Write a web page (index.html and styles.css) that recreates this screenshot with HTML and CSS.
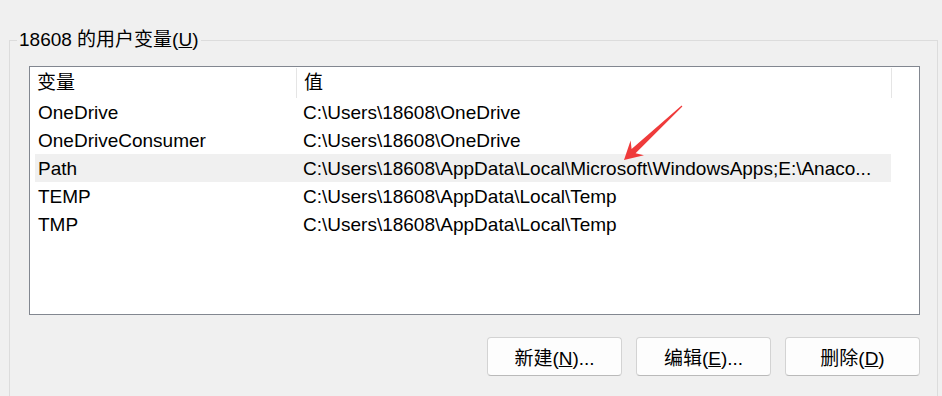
FILE: index.html
```html
<!DOCTYPE html>
<html lang="zh-CN">
<head>
    <meta charset="UTF-8">
    <meta name="viewport" content="width=device-width, initial-scale=1.0">
    <title>环境变量</title>
    <link rel="stylesheet" href="styles.css">
</head>
<body>
    <fieldset class="group">
        <legend>18608 的用户变量(<u>U</u>)</legend>
        <div class="list">
            <div class="list-head">
                <div class="head-cell head-name">变量</div>
                <div class="head-cell head-value">值</div>
            </div>
            <div class="row">
                <span class="name">OneDrive</span>
                <span class="value">C:\Users\18608\OneDrive</span>
            </div>
            <div class="row">
                <span class="name">OneDriveConsumer</span>
                <span class="value">C:\Users\18608\OneDrive</span>
            </div>
            <div class="row hover">
                <span class="name">Path</span>
                <span class="value">C:\Users\18608\AppData\Local\Microsoft\WindowsApps;E:\Anaco...</span>
            </div>
            <div class="row">
                <span class="name">TEMP</span>
                <span class="value">C:\Users\18608\AppData\Local\Temp</span>
            </div>
            <div class="row">
                <span class="name">TMP</span>
                <span class="value">C:\Users\18608\AppData\Local\Temp</span>
            </div>
        </div>
        <div class="actions">
            <button>新建(<u>N</u>)...</button>
            <button>编辑(<u>E</u>)...</button>
            <button>删除(<u>D</u>)</button>
        </div>
    </fieldset>

    <svg class="mark" viewBox="0 0 942 396" width="942" height="396">
        <polygon fill="#ef3b3b" points="624,160 644,155.3 635.6,153.3 682.4,106.4 681.6,105.6 631.6,149.1 630.6,140.5"/>
    </svg>
</body>
</html>
```

FILE: styles.css
```css
body {
    margin: 0;
    background-color: #f0f0f0;
    font-family: "Liberation Sans", "Noto Sans CJK SC", sans-serif;
    font-size: 19px;
    color: #000;
}
.group {
    margin: 28px 4px 0 9px;
    padding: 14px 17px 20px 19px;
    border: 1px solid #dcdcdc;
    border-bottom: 0;
    min-width: 0;
}
.group legend {
    margin-left: -12px;
    padding: 0 2px;
    line-height: 24px;
}
.list {
    box-sizing: border-box;
    height: 249px;
    background-color: #fff;
    border: 1px solid #828790;
}
.list-head {
    display: flex;
    height: 31px;
}
.head-cell {
    box-sizing: border-box;
    margin-top: 1px;
    height: 30px;
    line-height: 30px;
    padding-left: 7px;
    border-right: 1px solid #e5e5e5;
}
.head-name {
    width: 267px;
}
.head-value {
    width: 595px;
}
.row {
    display: flex;
    width: 856px;
    height: 28px;
    margin-left: 5px;
    line-height: 27px;
    padding-top: 1px;
    box-sizing: border-box;
    white-space: nowrap;
}
.row.hover {
    background-color: #f0f0f0;
}
.name {
    box-sizing: border-box;
    width: 262px;
    padding-left: 3px;
}
.value {
    flex: 1;
    padding-left: 6px;
    overflow: hidden;
    text-overflow: ellipsis;
}
.actions {
    display: flex;
    justify-content: flex-end;
    gap: 14px;
    margin-top: 22px;
}
.actions button {
    width: 135px;
    height: 39px;
    padding: 0;
    font: inherit;
    color: #000;
    background-color: #fdfdfd;
    border: 1px solid #d3d3d3;
    border-bottom-color: #bababa;
    border-radius: 4px;
}
.mark {
    position: absolute;
    left: 0;
    top: 0;
    pointer-events: none;
}
```
